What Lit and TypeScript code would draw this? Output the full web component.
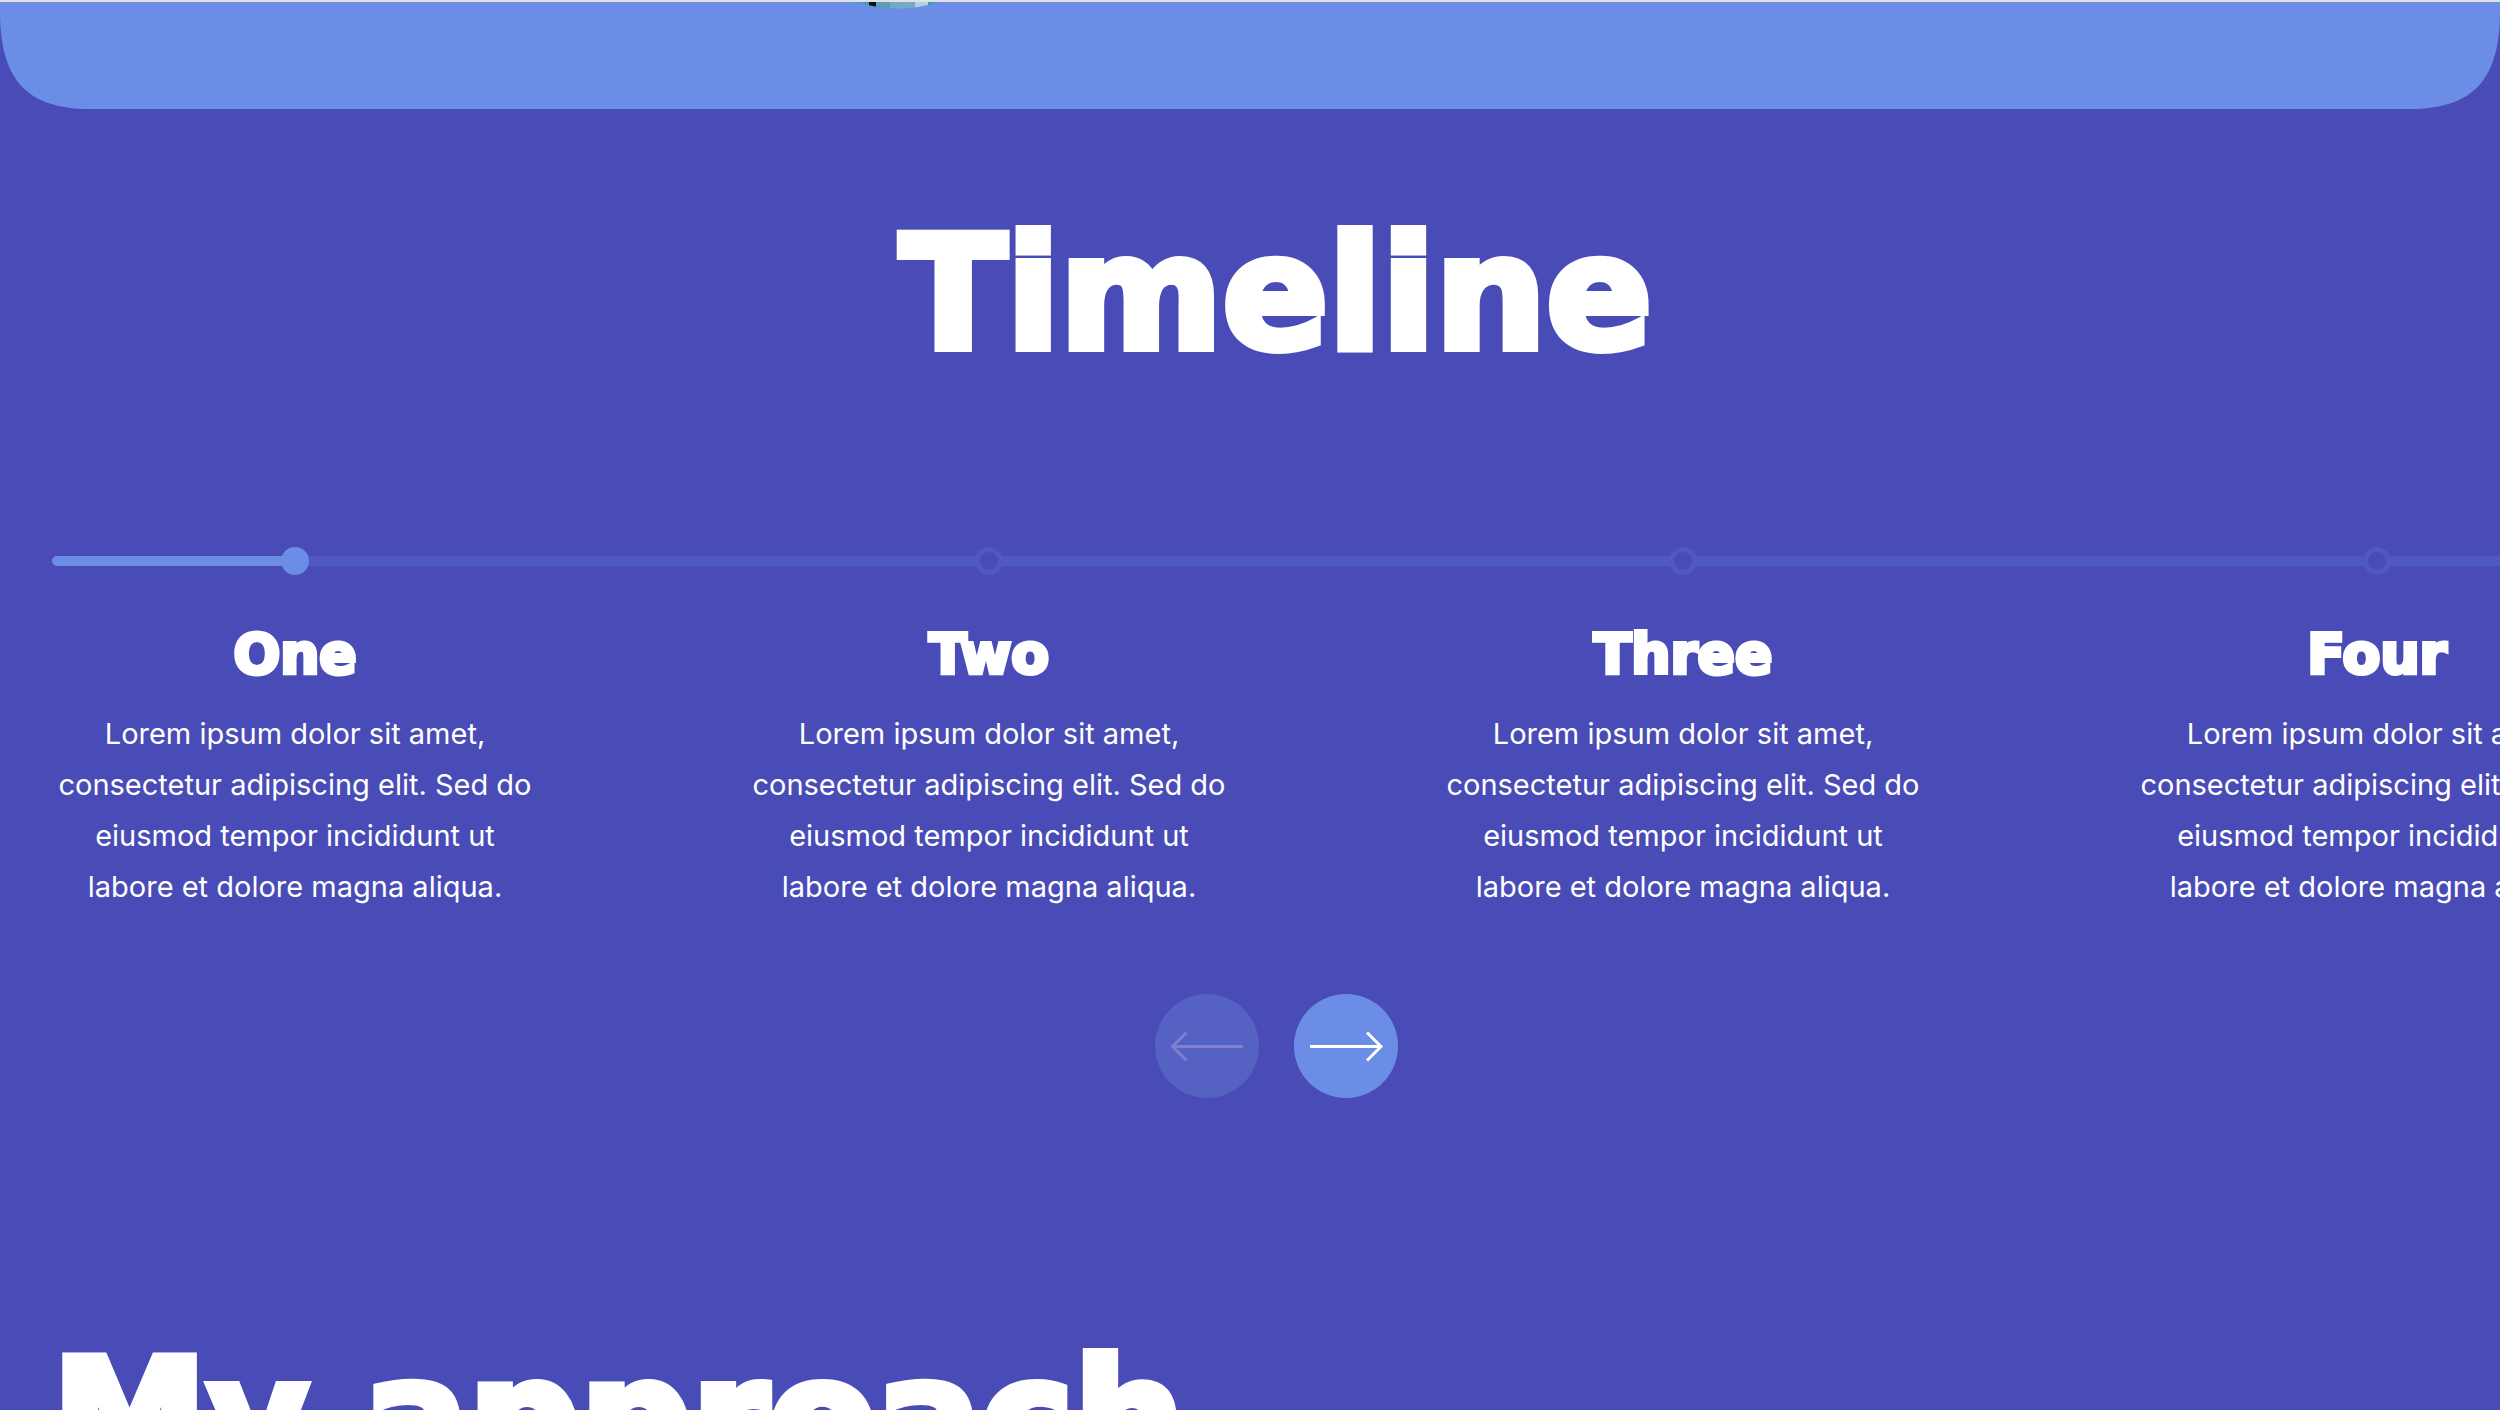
import { LitElement, html, css, svg } from "lit";
import { customElement, state } from "lit/decorators.js";
import { classMap } from "lit/directives/class-map.js";

const TEXT =
  "Lorem ipsum dolor sit amet, consectetur adipiscing elit. Sed do eiusmod tempor incididunt ut labore et dolore magna aliqua.";

const STEPS = ["One", "Two", "Three", "Four"].map((title) => ({ title, text: TEXT }));

@customElement("app-root")
export class AppRoot extends LitElement {
  static styles = css`
    :host {
      --page: #494cb6;
      --accent: #6c8de6;
      --rail: #4f59c0;
      --edge: 52px;
      display: block;
      height: 100vh;
      overflow: hidden;
      background: var(--page);
      color: #fff;
      font-family: Inter, "Liberation Sans", sans-serif;
    }
    .hero {
      display: flex;
      flex-direction: column;
      justify-content: space-between;
      height: 107px;
      border-top: 2px solid #e0e2e3;
      background: var(--accent);
    }
    .portrait {
      display: block;
      width: 80px;
      height: 7px;
      margin-left: 34.3%;
    }
    .corners {
      display: flex;
      justify-content: space-between;
    }
    .corner {
      display: block;
      width: 90px;
      height: 98px;
      fill: var(--page);
    }
    .display {
      margin: 0;
      font-family: "DejaVu Sans", sans-serif;
      font-weight: 700;
      -webkit-text-stroke: 8px #fff;
      font-size: 156px;
      line-height: 160px;
      white-space: nowrap;
    }
    .timeline {
      padding: 105px 0 0 var(--edge);
    }
    .timeline .display {
      text-align: center;
    }
    .steps {
      display: flex;
      margin: 173px 0 0;
      padding: 0;
      list-style: none;
      overflow: hidden;
    }
    .step {
      flex: 0 0 694px;
    }
    .rail {
      display: flex;
      align-items: center;
    }
    .lead,
    .trail {
      height: 10px;
      background: var(--rail);
    }
    .lead {
      flex: 0 0 231px;
    }
    .trail {
      flex: 1;
    }
    .dot {
      flex: none;
      box-sizing: border-box;
      width: 28px;
      height: 28px;
      margin: 0 -2px;
      border: 5px solid var(--rail);
      border-radius: 50%;
      background: var(--page);
      z-index: 1;
    }
    .step:first-child .lead {
      border-radius: 5px 0 0 5px;
    }
    .done .lead,
    .done .dot {
      background: var(--accent);
      border-color: var(--accent);
    }
    .copy {
      width: 486px;
      text-align: center;
    }
    .name {
      margin: 47px 0 0;
      font-family: "DejaVu Sans", sans-serif;
      font-weight: 700;
      -webkit-text-stroke: 4px #fff;
      font-size: 55px;
      line-height: 64px;
    }
    .text {
      margin: 22px 0 0;
      font-size: 29px;
      line-height: 51px;
    }
    .controls {
      display: flex;
      justify-content: center;
      gap: 35px;
      margin-top: 82px;
    }
    .arrow {
      width: 104px;
      height: 104px;
      padding: 0;
      border: 0;
      border-radius: 50%;
      background: var(--accent);
      color: #fff;
      cursor: pointer;
    }
    .arrow:disabled {
      background: #5561c3;
      color: #7f7fcd;
      cursor: default;
    }
    .glyph {
      display: block;
      width: 104px;
      height: 104px;
      fill: none;
      stroke: currentColor;
      stroke-width: 3;
    }
    .approach {
      padding: 239px var(--edge) 0;
    }
  `;

  @state() private current = 0;

  private move(by: number) {
    this.current = Math.min(STEPS.length - 1, Math.max(0, this.current + by));
  }

  private arrow(label: string, by: number, disabled: boolean) {
    const shape =
      by < 0
        ? svg`<path d="M88 52.5H17M31.5 38.5L17.5 52.5l14 14" />`
        : svg`<path d="M16 52.5H87M73 38.5L87 52.5l-14 14" />`;
    return html`<button class="arrow" type="button" aria-label=${label} ?disabled=${disabled} @click=${() => this.move(by)}>
      <svg class="glyph" viewBox="0 0 104 104" aria-hidden="true">${shape}</svg>
    </button>`;
  }

  render() {
    return html`
      <header class="hero">
        <svg class="portrait" viewBox="0 0 80 7" aria-hidden="true">
          <clipPath id="tip"><path d="M0 0C26 9 54 9 80 0Z" /></clipPath>
          <g clip-path="url(#tip)">
            <path fill="#3f9fae" d="M0 0h80v7H0z" />
            <path fill="#06131c" d="M11 0h7v7h-7z" />
            <path fill="#5c9dba" d="M18 0h14v7H18z" />
            <path fill="#74aac6" d="M32 0h25v7H32z" />
            <path fill="#b3cfe2" d="M57 0h13v7H57z" />
          </g>
        </svg>
        <div class="corners">
          <svg class="corner" viewBox="0 0 90 98" aria-hidden="true"><path d="M0 0C0 68 26 98 90 98H0Z" /></svg>
          <svg class="corner" viewBox="0 0 90 98" aria-hidden="true"><path d="M90 0C90 68 64 98 0 98H90Z" /></svg>
        </div>
      </header>
      <main>
        <section class="timeline">
          <h2 class="display">Timeline</h2>
          <ol class="steps">
            ${STEPS.map(
              (step, i) => html`<li class=${classMap({ step: true, done: i <= this.current })}>
                <div class="rail"><span class="lead"></span><span class="dot"></span><span class="trail"></span></div>
                <div class="copy">
                  <h3 class="name">${step.title}</h3>
                  <p class="text">${step.text}</p>
                </div>
              </li>`
            )}
          </ol>
          <div class="controls">
            ${this.arrow("Previous step", -1, this.current === 0)}
            ${this.arrow("Next step", 1, this.current === STEPS.length - 1)}
          </div>
        </section>
        <section class="approach">
          <h2 class="display">My approach</h2>
        </section>
      </main>
    `;
  }
}
